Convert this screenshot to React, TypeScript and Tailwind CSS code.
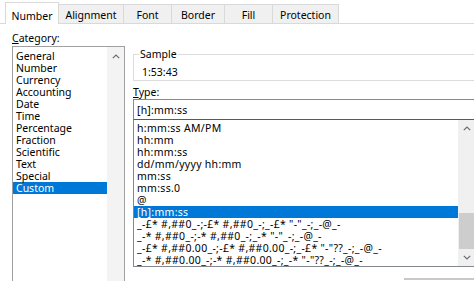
import React from "react";

const cats = ["General","Number","Currency","Accounting","Date","Time","Percentage","Fraction","Scientific","Text","Special","Custom"];
const types = [
  "h:mm:ss AM/PM",
  "hh:mm",
  "hh:mm:ss",
  "dd/mm/yyyy hh:mm",
  "mm:ss",
  "mm:ss.0",
  "@",
  "[h]:mm:ss",
  '_-£* #,##0_-;-£* #,##0_-;_-£* "-"_-;_-@_-',
  '_-* #,##0_-;-* #,##0_-;_-* "-"_-;_-@_-',
  '_-£* #,##0.00_-;-£* #,##0.00_-;_-£* "-"??_-;_-@_-',
  '_-* #,##0.00_-;-* #,##0.00_-;_-* "-"??_-;_-@_-',
];

function Up() {
  return (
    <svg width="8" height="5" viewBox="0 0 8 5"><path d="M0.8 4.2 L4 1 L7.2 4.2" fill="none" stroke="#6b6b6b" strokeWidth="1.2" /></svg>
  );
}
function Down() {
  return (
    <svg width="8" height="5" viewBox="0 0 8 5"><path d="M0.8 0.8 L4 4 L7.2 0.8" fill="none" stroke="#6b6b6b" strokeWidth="1.2" /></svg>
  );
}

export default function App() {
  return (
    <div className="w-[474px] h-[281px] bg-white overflow-hidden text-black text-[10.5px] leading-[12px] font-['Noto_Sans',sans-serif]">
      <div className="flex h-[24px] pl-[5px] items-end border-b border-[#d9d9d9]">
        <div className="w-[54px] h-[22px] -mb-px bg-white border border-b-0 border-[#d9d9d9] flex items-center justify-center pt-[4px] relative z-10">Number</div>
        <div className="w-[66px] h-[19px] -ml-px bg-[#f0f0f0] border border-b-0 border-[#d9d9d9] flex items-center justify-center pt-[2px]">Alignment</div>
        <div className="w-[49px] h-[19px] -ml-px bg-[#f0f0f0] border border-b-0 border-[#d9d9d9] flex items-center justify-center pt-[2px]">Font</div>
        <div className="w-[54px] h-[19px] -ml-px bg-[#f0f0f0] border border-b-0 border-[#d9d9d9] flex items-center justify-center pt-[2px]">Border</div>
        <div className="w-[49px] h-[19px] -ml-px bg-[#f0f0f0] border border-b-0 border-[#d9d9d9] flex items-center justify-center pt-[2px]">Fill</div>
        <div className="w-[67px] h-[19px] -ml-px bg-[#f0f0f0] border border-b-0 border-[#d9d9d9] flex items-center justify-center pt-[2px]">Protection</div>
      </div>
      <div className="flex">
        <div className="w-[125px] pl-[12px] pt-[7px] shrink-0">
          <div className="h-[14px] leading-[14px]"><span className="underline">C</span>ategory:</div>
          <div className="flex h-[240px] mt-[1px] border border-[#a0a0a0]">
            <div className="flex-1 pt-[3px]">
              {cats.map((c) => (
                <div key={c} className={"h-[12px] leading-[12px] pl-[3px] " + (c === "Custom" ? "bg-[#0078d7] text-white" : "")}>{c}</div>
              ))}
            </div>
            <div className="w-[17px] bg-[#f3f3f3] flex flex-col items-center pt-[7px]">
              <Up />
            </div>
          </div>
        </div>
        <div className="w-[343px] ml-[8px] shrink-0 pt-[23px]">
          <fieldset className="border border-[#dcdcdc] p-0 pb-[1px]">
            <legend className="ml-[5px] px-[1px] leading-[14px]">Sample</legend>
            <div className="mt-[4px] pl-[8px] h-[14px] leading-[14px]">1:53:43</div>
          </fieldset>
          <div className="mt-[4px] h-[14px] leading-[14px]"><span className="underline">T</span>ype:</div>
          <div className="h-[21px] border border-[#8a8a8a] border-b-[#5a5a5a] pl-[3px] flex items-center tracking-[0.2px]">[h]:mm:ss</div>
          <div className="flex h-[147px] border border-t-0 border-[#828790]">
            <div className="flex-1 pt-[2px] tracking-[0.3px]">
              {types.map((t, i) => (
                <div key={i} className={"h-[12px] leading-[12px] pl-[3px] whitespace-pre " + (i === 7 ? "bg-[#0078d7] text-white" : "")}>{t}</div>
              ))}
            </div>
            <div className="w-[17px] bg-[#f0f0f0] flex flex-col">
              <div className="h-[17px] flex items-center justify-center"><Up /></div>
              <div className="flex-1 flex flex-col justify-end px-[1px]">
                <div className="h-[36px] bg-[#cdcdcd]" />
              </div>
              <div className="h-[17px] flex items-center justify-center"><Down /></div>
            </div>
          </div>
          <div className="ml-auto mr-[2px] w-[70px] h-[2px] mt-[11px] bg-[#c8c8c8]" />
        </div>
      </div>
    </div>
  );
}
